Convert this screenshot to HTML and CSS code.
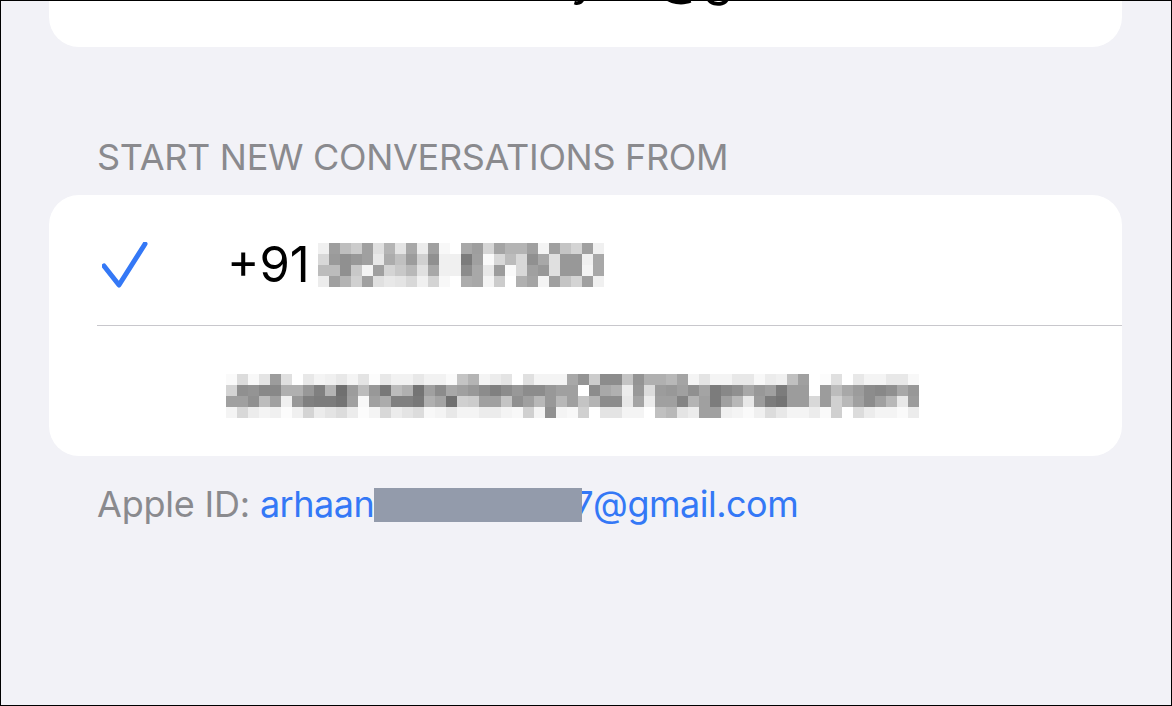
FILE: index.html
```html
<!DOCTYPE html>
<html lang="en">
<head>
<meta charset="utf-8">
<title>Send &amp; Receive</title>
<link rel="stylesheet" href="styles.css">
</head>
<body>
<div class="screen">
  <div class="scroll">
    <section class="card card-top">
      <div class="row row-last">
        <svg class="check" viewBox="0 0 46 46" aria-hidden="true"><polyline points="2,24 17,43 43,2"/></svg>
        <span class="value">arhaanvarshneyoo@gmail.com</span>
      </div>
    </section>

    <h2 class="section-header">START NEW CONVERSATIONS FROM</h2>

    <section class="card">
      <div class="row">
        <svg class="check" viewBox="0 0 46 46" aria-hidden="true"><polyline points="2,24 17,43 43,2"/></svg>
        <span class="value">+91</span>
        <div class="mosaic mosaic-phone" data-cols="26" data-rows="f0 9e be cc a0 e0 b4 e4 a8 ec a0 f8 ff a8 9e d6 a4 b4 b4 a0 f4 a0 c4 d4 a0 f0|d8 9a 90 98 a0 e8 ac c0 9c d0 90 f0 f0 7c a0 fa d8 bc d8 90 a8 e0 98 98 f0 a8|bc bc 90 c8 f4 a0 d4 c8 b8 e0 a8 f0 f0 8c a8 e8 9c fa d8 a0 98 e0 98 98 f4 a8|ec a0 b4 d0 a0 e0 e8 e4 d8 f0 d4 f8 ff ac a8 f4 cc ff b0 a4 f4 a0 c4 d4 a0 f0"></div>
      </div>
      <div class="divider"></div>
      <div class="row">
        <span class="check-space"></span>
        <div class="mosaic mosaic-email" data-cols="63" data-rows="fa dc f8 e4 9c e0 ff e8 f4 f0 e8 f4 e4 fc e8 f2 f2 e8 f2 f2 fa c4 b4 f4 ec e4 ff e0 f4 f4 f4 a8 94 cc 8c 8c c4 94 b0 b0 b8 a4 f4 e4 f4 f4 e8 e8 f8 ec f0 c0 a0 ff fc e0 ff e8 f4 f4 e8 e8 f8|d4 90 94 88 88 b0 b0 98 80 b4 70 9c bc 98 78 bc b0 74 a0 8c a8 a0 98 8c 80 8c 98 8c 8c 98 a0 a0 ff 8c a8 b0 ec 98 dc 9c 98 a0 90 a4 7c 88 90 a8 98 a0 7c 9c 9c ff 9c bc a8 9c 8c 88 90 a8 98|a0 a0 90 bc a0 f0 98 80 7c 7c 74 a0 f8 a0 ac 80 80 78 b0 a4 70 d0 cc a0 a0 c4 90 a0 b8 98 b8 a0 c4 b4 8c 8c e8 a4 ec a0 a0 84 b4 a0 7c a0 b8 e8 9c 7c 74 9c 9c d8 9c d0 b8 a0 8c a0 b8 e8 9c|f4 d8 ec f4 f0 fc f0 d4 ec e4 dc ec fc f4 d8 ec e4 dc f8 f4 e8 f4 f4 ec ec f4 f8 d0 f4 90 f4 f8 d0 ff e4 e4 f4 f4 ff c0 b8 e4 ec a0 a0 f0 f4 fa f0 dc e8 f4 f4 ec fa d0 ff dc ec f4 f4 fa ec"></div>
      </div>
    </section>

    <p class="footer">Apple ID: <span class="link">arhaan<span class="redact"></span>7@gmail.com</span></p>
  </div>
</div>
<script src="mosaic.js"></script>
</body>
</html>
```

FILE: styles.css
```css
* { box-sizing: border-box; }
html, body { margin: 0; padding: 0; }
body { background: #f2f2f7; font-family: Inter, "Noto Sans", "Liberation Sans", sans-serif; }

.screen {
  width: 1172px;
  height: 706px;
  border: 1px solid #000;
  background: #f2f2f7;
  overflow: hidden;
}

.scroll {
  margin-top: -85px;
  padding: 0 49px 0 48px;
}

.card {
  background: #fff;
  border-radius: 30px;
  overflow: hidden;
}

.row {
  height: 130px;
  padding-top: 10px;
  padding-left: 53px;
  display: flex;
  align-items: center;
}
.row-last { height: 131px; padding-top: 0; padding-bottom: 7px; }

.check {
  width: 46px;
  height: 46px;
  flex: none;
  margin-right: 79px;
  fill: none;
  stroke: #3478f6;
  stroke-width: 5;
  stroke-linecap: round;
  stroke-linejoin: round;
}
.check-space { width: 128px; flex: none; }

.value {
  font-size: 49px;
  line-height: 60px;
  color: #000;
  white-space: nowrap;
}

.divider {
  height: 1px;
  margin-left: 48px;
  background: #c8c7cc;
}

.section-header {
  margin: 88px 0 16px 48px;
  font-size: 36px;
  line-height: 44px;
  font-weight: 400;
  color: #8a8a8e;
  letter-spacing: -0.3px;
}

.mosaic { display: grid; flex: none; grid-auto-rows: 11px; }
.mosaic-phone { grid-template-columns: repeat(26, 11px); margin-left: 8px; }
.mosaic-email { grid-template-columns: repeat(63, 11px); margin-left: -4px; }

.footer {
  margin: 26px 0 0 48px;
  font-size: 36px;
  line-height: 44px;
  color: #8a8a8e;
  letter-spacing: -0.2px;
  white-space: nowrap;
}
.link { color: #3478f6; letter-spacing: -0.5px; }
.redact {
  display: inline-block;
  width: 208px;
  height: 34px;
  margin-right: -9px;
  vertical-align: -5px;
  background: #939bab;
  position: relative;
  z-index: 1;
}
```

FILE: mosaic.js
```js
document.querySelectorAll('.mosaic').forEach(function (grid) {
  var rows = grid.getAttribute('data-rows').split('|');
  var cols = parseInt(grid.getAttribute('data-cols'), 10);
  rows.forEach(function (row) {
    var cells = row.trim().split(/\s+/);
    for (var i = 0; i < cols; i++) {
      var v = parseInt(cells[i] || 'ff', 16);
      var d = document.createElement('div');
      d.style.background = 'rgb(' + v + ',' + v + ',' + v + ')';
      grid.appendChild(d);
    }
  });
});
```
